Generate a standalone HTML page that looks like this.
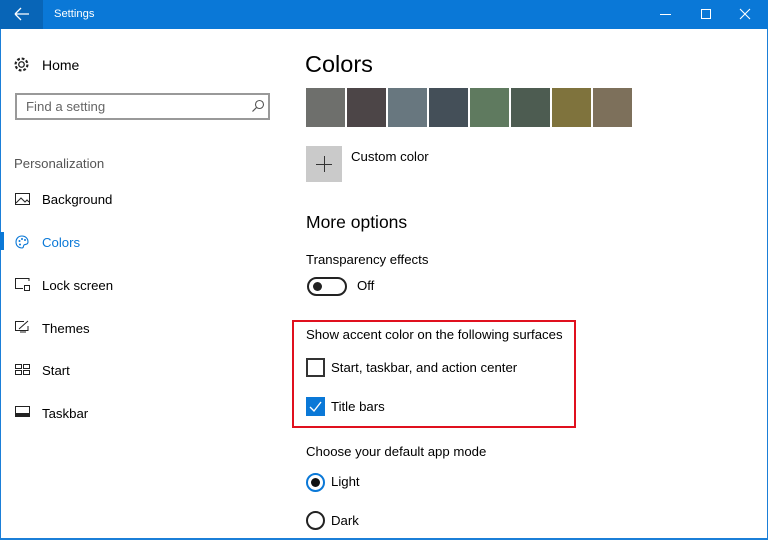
<!DOCTYPE html>
<html><head><meta charset="utf-8"><style>
*{margin:0;padding:0;box-sizing:border-box}
body{width:768px;height:540px;overflow:hidden;background:#fff;font-family:"Liberation Sans",sans-serif;color:#000;position:relative}
.abs{position:absolute}
.t{font-size:13.2px;white-space:nowrap}
.sw{position:absolute;top:88px;width:39px;height:39px}
</style></head><body>
<div class="abs" style="left:0;top:0;width:768px;height:29px;background:#0a78d7"></div>
<div class="abs" style="left:0;top:0;width:43px;height:29px;background:#0865b7"></div>
<svg class="abs" style="left:14px;top:7px" width="16" height="14"><path d="M1 7H15M1 7L7 1M1 7L7 13" stroke="#fff" stroke-width="1.3" fill="none"/></svg>
<div class="abs" style="left:54px;top:8px;color:#fff;font-size:11.2px;white-space:nowrap">Settings</div>
<div class="abs" style="left:660px;top:14px;width:11px;height:1px;background:#fff"></div>
<div class="abs" style="left:701px;top:9px;width:10px;height:10px;border:1px solid #fff"></div>
<svg class="abs" style="left:739px;top:8px" width="12" height="12"><path d="M1 1L11 11M11 1L1 11" stroke="#fff" stroke-width="1.1"/></svg>
<div class="abs" style="left:0;top:29px;width:1px;height:511px;background:#1b7fd8"></div>
<div class="abs" style="left:767px;top:29px;width:1px;height:511px;background:#1b7fd8"></div>
<div class="abs" style="left:0;top:538px;width:768px;height:2px;background:#1b7fd8"></div>

<svg class="abs" style="left:13px;top:56px" width="17" height="17" viewBox="0 0 16 16"><circle cx="8" cy="8" r="2.6" fill="none" stroke="#222" stroke-width="1.2"/><circle cx="8" cy="8" r="5.6" fill="none" stroke="#222" stroke-width="2" stroke-dasharray="2.6 1.8"/></svg>
<div class="abs t" style="left:42px;top:57px;font-size:14px">Home</div>
<div class="abs" style="left:15px;top:93px;width:255px;height:27px;border:2px solid #999"></div>
<div class="abs t" style="left:26px;top:99px;color:#666">Find a setting</div>
<svg class="abs" style="left:251px;top:99px" width="14" height="14"><circle cx="8.5" cy="5.5" r="4" fill="none" stroke="#555" stroke-width="1.1"/><path d="M5.5 8.5L1.5 12.5" stroke="#555" stroke-width="1.2"/></svg>
<div class="abs t" style="left:14px;top:156px;color:#555">Personalization</div>

<svg class="abs" style="left:15px;top:193px" width="16" height="13"><rect x="0.5" y="0.5" width="14" height="11" fill="none" stroke="#222"/><path d="M1 10L6 5L10 9L12 7L14 9" fill="none" stroke="#222"/></svg>
<div class="abs t" style="left:42px;top:192px">Background</div>
<div class="abs" style="left:0;top:232px;width:4px;height:18px;background:#0a78d7"></div>
<svg class="abs" style="left:15px;top:235px" width="15" height="14"><path d="M7 1C3 1 1 4 1 7C1 11 4 13 7 13C9 13 8 11 9 10C10 9 13 10 13 7C13 3 10 1 7 1Z" fill="none" stroke="#0a78d7" stroke-width="1.1"/><circle cx="4.5" cy="6" r="1" fill="#0a78d7"/><circle cx="7" cy="4" r="1" fill="#0a78d7"/><circle cx="10" cy="5" r="1" fill="#0a78d7"/><circle cx="5" cy="9.5" r="1" fill="#0a78d7"/></svg>
<div class="abs t" style="left:42px;top:235px;color:#0a78d7">Colors</div>
<svg class="abs" style="left:15px;top:278px" width="16" height="14"><path d="M14 3V0.5H0.5V10.5H8" fill="none" stroke="#222"/><rect x="9.5" y="7.5" width="5" height="5" fill="none" stroke="#222"/></svg>
<div class="abs t" style="left:42px;top:278px">Lock screen</div>
<svg class="abs" style="left:15px;top:320px" width="16" height="14"><path d="M9 1.5H0.5V10.5H13V6" fill="none" stroke="#222"/><path d="M4 9L13 1M5 12H11" stroke="#222"/></svg>
<div class="abs t" style="left:42px;top:321px">Themes</div>
<svg class="abs" style="left:15px;top:364px" width="16" height="12"><rect x="0.5" y="0.5" width="6" height="4" fill="none" stroke="#222"/><rect x="8.5" y="0.5" width="6" height="4" fill="none" stroke="#222"/><rect x="0.5" y="6.5" width="6" height="4" fill="none" stroke="#222"/><rect x="8.5" y="6.5" width="6" height="4" fill="none" stroke="#222"/></svg>
<div class="abs t" style="left:42px;top:363px">Start</div>
<svg class="abs" style="left:15px;top:406px" width="16" height="12"><rect x="0.5" y="0.5" width="14" height="10" fill="none" stroke="#222"/><rect x="1" y="7" width="13" height="3" fill="#222"/></svg>
<div class="abs t" style="left:42px;top:406px">Taskbar</div>

<div class="abs" style="left:305px;top:51px;font-size:23.5px;white-space:nowrap">Colors</div>
<div class="sw" style="left:306px;background:#6e6f6c"></div>
<div class="sw" style="left:347px;background:#4c4547"></div>
<div class="sw" style="left:388px;background:#68777f"></div>
<div class="sw" style="left:429px;background:#444f58"></div>
<div class="sw" style="left:470px;background:#5f7a5f"></div>
<div class="sw" style="left:511px;background:#4d5c51"></div>
<div class="sw" style="left:552px;background:#7f733d"></div>
<div class="sw" style="left:593px;background:#7d705b"></div>
<div class="abs" style="left:306px;top:146px;width:36px;height:36px;background:#cacaca"></div>
<div class="abs" style="left:316px;top:164px;width:16px;height:1px;background:#333"></div>
<div class="abs" style="left:324px;top:156px;width:1px;height:16px;background:#333"></div>
<div class="abs t" style="left:351px;top:149px">Custom color</div>

<div class="abs" style="left:306px;top:212px;font-size:17.5px;white-space:nowrap">More options</div>
<div class="abs t" style="left:306px;top:252px">Transparency effects</div>
<div class="abs" style="left:307px;top:277px;width:40px;height:19px;border:2px solid #222;border-radius:10px"></div>
<div class="abs" style="left:313px;top:282px;width:9px;height:9px;border-radius:50%;background:#222"></div>
<div class="abs t" style="left:357px;top:278px">Off</div>

<div class="abs" style="left:292px;top:320px;width:284px;height:108px;border:2px solid #e0101e"></div>
<div class="abs t" style="left:306px;top:327px">Show accent color on the following surfaces</div>
<div class="abs" style="left:306px;top:358px;width:19px;height:19px;border:2px solid #333"></div>
<div class="abs t" style="left:331px;top:360px">Start, taskbar, and action center</div>
<div class="abs" style="left:306px;top:397px;width:19px;height:19px;background:#0a78d7"></div>
<svg class="abs" style="left:306px;top:397px" width="19" height="19"><path d="M4 10L8 14L15 5" fill="none" stroke="#fff" stroke-width="1.4"/></svg>
<div class="abs t" style="left:331px;top:399px">Title bars</div>

<div class="abs t" style="left:306px;top:444px">Choose your default app mode</div>
<div class="abs" style="left:306px;top:473px;width:19px;height:19px;border:2px solid #0a78d7;border-radius:50%"></div>
<div class="abs" style="left:311px;top:478px;width:9px;height:9px;border-radius:50%;background:#111"></div>
<div class="abs t" style="left:331px;top:474px">Light</div>
<div class="abs" style="left:306px;top:511px;width:19px;height:19px;border:2px solid #222;border-radius:50%"></div>
<div class="abs t" style="left:331px;top:513px">Dark</div>
</body></html>
